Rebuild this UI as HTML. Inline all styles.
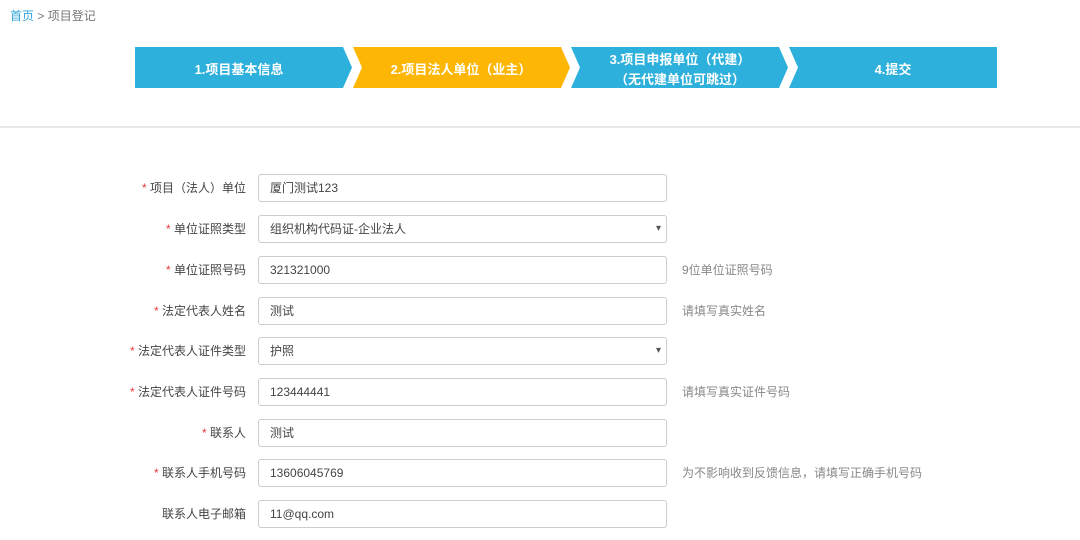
<!DOCTYPE html>
<html><head><meta charset="utf-8"><style>
body{margin:0;width:1080px;height:540px;overflow:hidden;background:#fff;font-family:"Liberation Sans","Noto Sans CJK SC",sans-serif;font-size:12px;color:#333;position:relative}
.bc{position:absolute;left:10px;top:7px;color:#777}
.bc a{color:#2fa4d8}
.line{position:absolute;left:0;top:126px;width:1080px;height:2px;background:#e8e8e8}
.row{position:absolute;left:0;width:1080px;height:28px}
.lab{position:absolute;right:834px;top:0;line-height:28px;color:#444;white-space:nowrap}
.lab i{color:#e4393c;font-style:normal}
.in{position:absolute;left:258px;width:396px;height:26px;border:1px solid #ccc;border-radius:3px;line-height:26px;padding-left:11px;box-sizing:content-box;color:#444}
.in.sel:after{content:"▾";position:absolute;right:5px;top:0;font-size:10px;color:#555}
.hint{position:absolute;left:682px;line-height:28px;color:#888}
</style></head><body>
<div class="bc"><a>首页</a> &gt; 项目登记</div>
<svg style="position:absolute;left:0;top:0" width="1080" height="100">
<polygon points="135,47 343,47 352,67.5 343,88 135,88" fill="#2eb0dc"/>
<polygon points="353,47 561,47 570,67.5 561,88 353,88 362,67.5" fill="#fdb603"/>
<polygon points="571,47 779,47 788,67.5 779,88 571,88 580,67.5" fill="#2eb0dc"/>
<polygon points="789,47 997,47 997,88 789,88 798,67.5" fill="#2eb0dc"/>
<g fill="#fff" font-weight="bold" font-size="13" text-anchor="middle" font-family="Liberation Sans,Noto Sans CJK SC,sans-serif">
<text x="239" y="74">1.项目基本信息</text>
<text x="461" y="74">2.项目法人单位（业主）</text>
<text x="680" y="64">3.项目申报单位（代建）</text>
<text x="680" y="84">（无代建单位可跳过）</text>
<text x="893" y="74">4.提交</text>
</g></svg>
<div class="line"></div>
<div class="row" style="top:174px"><span class="lab"><i>*</i> 项目（法人）单位</span><div class="in">厦门测试123</div></div>
<div class="row" style="top:215px"><span class="lab"><i>*</i> 单位证照类型</span><div class="in sel">组织机构代码证-企业法人</div></div>
<div class="row" style="top:256px"><span class="lab"><i>*</i> 单位证照号码</span><div class="in">321321000</div><span class="hint">9位单位证照号码</span></div>
<div class="row" style="top:297px"><span class="lab"><i>*</i> 法定代表人姓名</span><div class="in">测试</div><span class="hint">请填写真实姓名</span></div>
<div class="row" style="top:337px"><span class="lab"><i>*</i> 法定代表人证件类型</span><div class="in sel">护照</div></div>
<div class="row" style="top:378px"><span class="lab"><i>*</i> 法定代表人证件号码</span><div class="in">123444441</div><span class="hint">请填写真实证件号码</span></div>
<div class="row" style="top:419px"><span class="lab"><i>*</i> 联系人</span><div class="in">测试</div></div>
<div class="row" style="top:459px"><span class="lab"><i>*</i> 联系人手机号码</span><div class="in">13606045769</div><span class="hint">为不影响收到反馈信息，请填写正确手机号码</span></div>
<div class="row" style="top:500px"><span class="lab">联系人电子邮箱</span><div class="in">11@qq.com</div></div>
</body></html>
